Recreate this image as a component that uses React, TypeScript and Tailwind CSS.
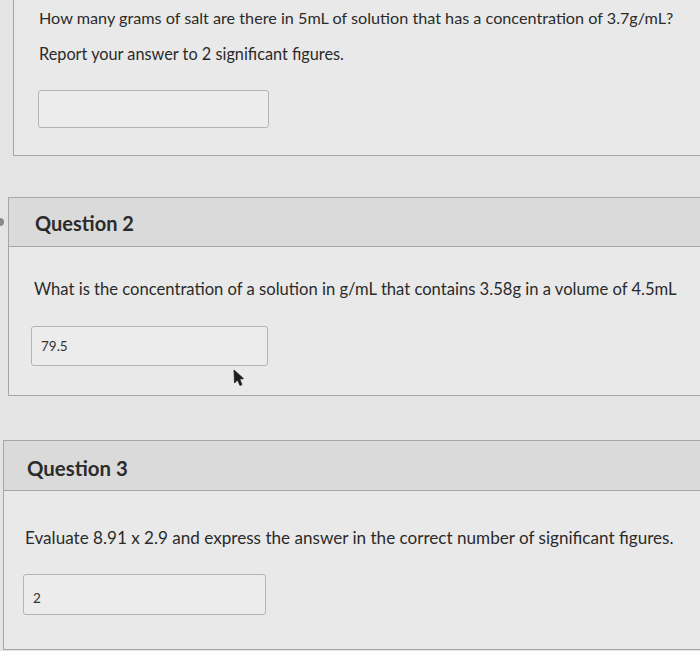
const font = { fontFamily: "Lato, 'Open Sans', sans-serif" };

function AnswerBox({ value, className }: { value?: string; className: string }) {
  return (
    <div
      className={[
        "flex items-center rounded-[3px] border border-[#b4b4b4] bg-[#ececec] pl-[9px] text-[13.5px] text-[#333]",
        className,
      ].join(" ")}
    >
      {value}
    </div>
  );
}

export default function App() {
  return (
    <div className="relative h-[651px] w-[700px] overflow-hidden bg-[#e4e4e4] text-[#2b2b2b]" style={font}>
      {/* Question 1 body (header scrolled off) */}
      <div className="ml-[13px] h-[156px] border-b border-l border-[#a6a6a6] bg-[#e9e9e9] pl-[25px] pt-[7px]">
        <p className="text-[16.2px] leading-[22px]">
          How many grams of salt are there in 5mL of solution that has a concentration of 3.7g/mL?
        </p>
        <p className="mt-[14px] text-[16.3px] leading-[22px]">Report your answer to 2 significant figures.</p>
        <AnswerBox className="ml-[-1px] mt-[25px] h-[38px] w-[231px]" />
      </div>

      {/* small marker at the left edge */}
      <div className="absolute left-[-4px] top-[218px] h-[8px] w-[8px] rounded-full bg-[#8a8a8a]" />

      {/* Question 2 */}
      <div className="ml-[8px] mt-[41px] border-b border-l border-t border-[#a6a6a6] bg-[#e9e9e9]">
        <div className="flex h-[49px] items-center border-b border-[#a6a6a6] bg-[#dadada] pl-[26px] pt-[2px] text-[20px] font-bold">
          Question 2
        </div>
        <div className="h-[148px] pl-[25px] pt-[31px]">
          <p className="text-[16.6px] leading-[22px]">
            What is the concentration of a solution in g/mL that contains 3.58g in a volume of 4.5mL
          </p>
          <AnswerBox value="79.5" className="ml-[-3px] mt-[26px] h-[40px] w-[237px]" />
        </div>
      </div>

      {/* cursor */}
      <svg className="absolute left-[231px] top-[369px]" width="14" height="18" viewBox="0 0 14 18">
        <path d="M3 1 L3.5 14 L6.5 11 L9 16.5 L11 15.5 L8.7 10.2 L12.5 9.6 Z" fill="#1e1e1e" stroke="#1e1e1e" strokeWidth="0.8" strokeLinejoin="round" />
      </svg>

      {/* Question 3 */}
      <div className="ml-[3px] mt-[44px] border-b border-l border-t border-[#a6a6a6] bg-[#e9e9e9]">
        <div className="flex h-[50px] items-center border-b border-[#a6a6a6] bg-[#dadada] pl-[23px] pt-[6px] text-[20.4px] font-bold">
          Question 3
        </div>
        <div className="h-[158px] pl-[21px] pt-[36px]">
          <p className="text-[17.1px] leading-[22px]">
            Evaluate 8.91 x 2.9 and express the answer in the correct number of significant figures.
          </p>
          <AnswerBox value="2" className="ml-[-2px] mt-[25px] h-[41px] w-[243px] pt-[8px]" />
        </div>
      </div>
    </div>
  );
}
